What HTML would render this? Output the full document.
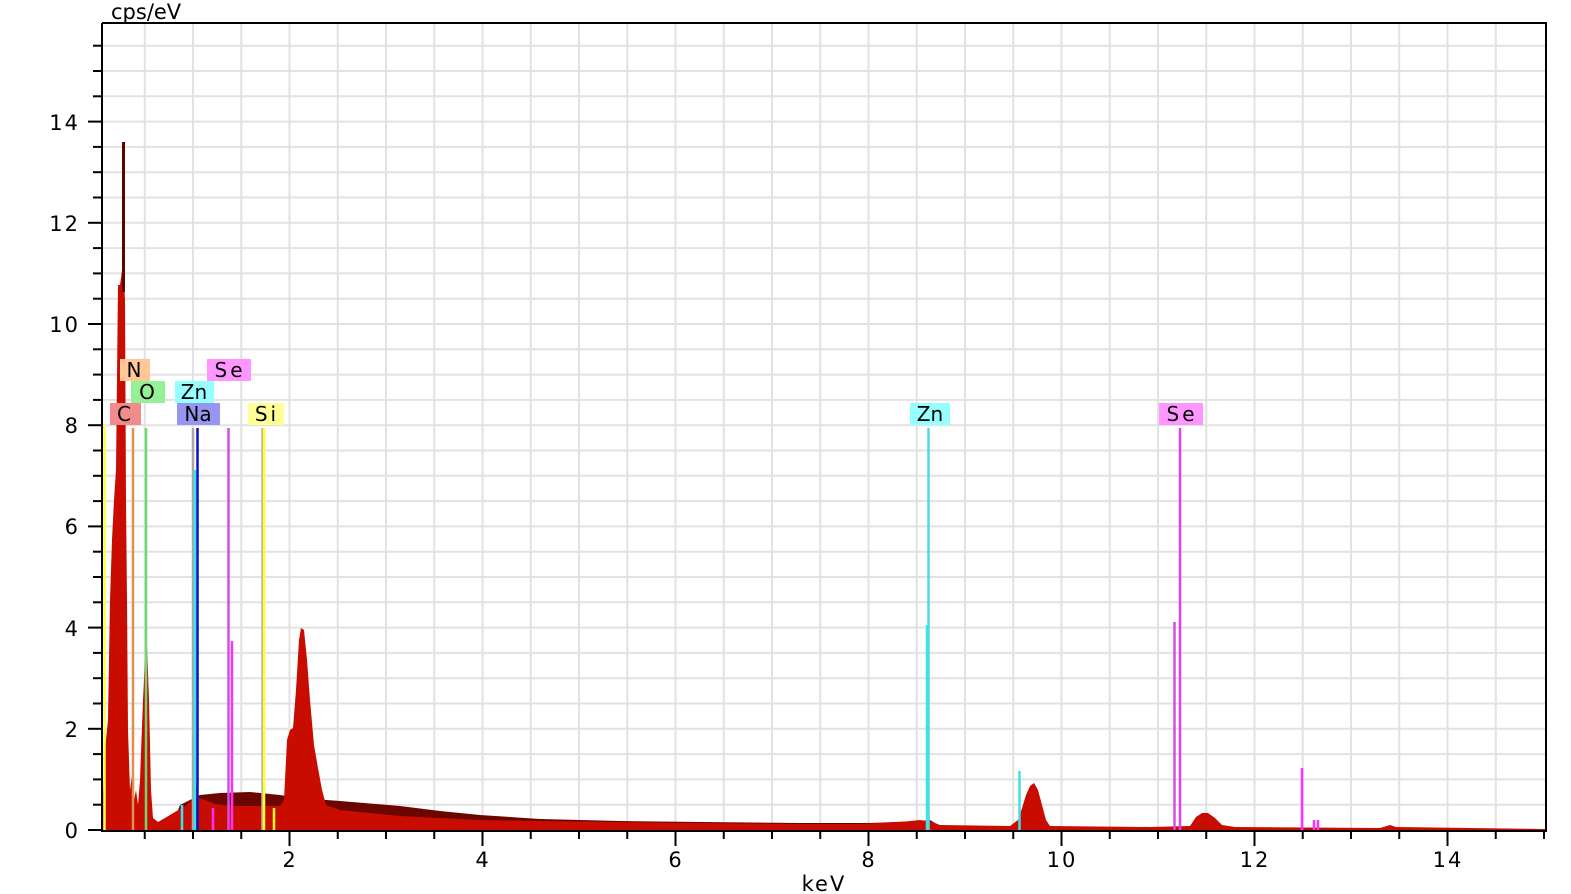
<!DOCTYPE html>
<html><head><meta charset="utf-8"><style>
html,body{margin:0;padding:0;background:#fff;}
svg{display:block;}
text{font-family:"DejaVu Sans","Liberation Sans",sans-serif;}
</style></head><body>
<svg width="1571" height="894" viewBox="0 0 1571 894" xmlns="http://www.w3.org/2000/svg">
<g stroke="#e2e2e2" stroke-width="2">
<line x1="144.75" y1="23" x2="144.75" y2="831"/><line x1="193" y1="23" x2="193" y2="831"/><line x1="241.25" y1="23" x2="241.25" y2="831"/><line x1="289.5" y1="23" x2="289.5" y2="831"/><line x1="337.75" y1="23" x2="337.75" y2="831"/><line x1="386" y1="23" x2="386" y2="831"/><line x1="434.25" y1="23" x2="434.25" y2="831"/><line x1="482.5" y1="23" x2="482.5" y2="831"/><line x1="530.75" y1="23" x2="530.75" y2="831"/><line x1="579" y1="23" x2="579" y2="831"/><line x1="627.25" y1="23" x2="627.25" y2="831"/><line x1="675.5" y1="23" x2="675.5" y2="831"/><line x1="723.75" y1="23" x2="723.75" y2="831"/><line x1="772" y1="23" x2="772" y2="831"/><line x1="820.25" y1="23" x2="820.25" y2="831"/><line x1="868.5" y1="23" x2="868.5" y2="831"/><line x1="916.75" y1="23" x2="916.75" y2="831"/><line x1="965" y1="23" x2="965" y2="831"/><line x1="1013.25" y1="23" x2="1013.25" y2="831"/><line x1="1061.5" y1="23" x2="1061.5" y2="831"/><line x1="1109.75" y1="23" x2="1109.75" y2="831"/><line x1="1158" y1="23" x2="1158" y2="831"/><line x1="1206.25" y1="23" x2="1206.25" y2="831"/><line x1="1254.5" y1="23" x2="1254.5" y2="831"/><line x1="1302.75" y1="23" x2="1302.75" y2="831"/><line x1="1351" y1="23" x2="1351" y2="831"/><line x1="1399.25" y1="23" x2="1399.25" y2="831"/><line x1="1447.5" y1="23" x2="1447.5" y2="831"/><line x1="1495.75" y1="23" x2="1495.75" y2="831"/>
</g>
<g id="hg" stroke="#e2e2e2" stroke-width="2"></g>
<polygon fill="#6a0500" points="170,831 180,805 200,795 220,793 250,792 280,795 300,798 340,801 400,806 440,811 480,815 540,819 620,821 700,822 800,823 870,823 920,821 930,820 940,826 1000,826 1000,831"/>
<polygon fill="#c80c00" points="102,831 104,760 106,740 108,720 110,600 112,540 114,500 116,470 118,285 120,285 122,270 124,280 125,300 126,500 127,600 128,730 130,790 132,775 134,800 136,790 138,805 140,780 143,700 145,660 147,645 149,700 151,790 153,818 158,822 165,818 175,812 185,806 192,800 196,785 199,798 205,800 215,804 230,806 260,806 280,806 284,800 287,740 290,730 293,728 296,690 299,640 301,628 304,630 307,660 310,700 314,745 318,768 322,790 326,805 340,810 360,812 400,816 440,818 480,820 540,821 620,822 700,823 800,824 860,824 900,822 920,820 932,822 940,825 1010,826 1018,820 1022,808 1026,795 1030,786 1034,783 1038,790 1042,805 1046,820 1050,826 1150,827 1190,826 1196,817 1202,813 1208,813 1215,818 1222,825 1235,827 1380,828 1390,825 1396,827 1545,829 1545,831"/>
<rect x="108" y="720" width="6" height="111" fill="#c80c00"/>
<rect x="122" y="142" width="3" height="150" fill="#5a0500"/>
<g stroke-width="2.5">
<line x1="104.5" y1="425" x2="104.5" y2="831" stroke="#ffff40"/>
<line x1="133" y1="428" x2="133" y2="831" stroke="#e0904a"/>
<line x1="146" y1="428" x2="146" y2="831" stroke="#70d870"/>
<line x1="193" y1="428" x2="193" y2="831" stroke="#a8a8a8"/>
<line x1="195" y1="470" x2="195" y2="831" stroke="#30e8f0"/>
<line x1="197.5" y1="428" x2="197.5" y2="831" stroke="#1010c0"/>
<line x1="228.5" y1="428" x2="228.5" y2="831" stroke="#d050e0"/>
<line x1="232" y1="641" x2="232" y2="831" stroke="#ff30ff"/>
<line x1="262.5" y1="428" x2="262.5" y2="831" stroke="#b0b0b0"/>
<line x1="264" y1="428" x2="264" y2="831" stroke="#ffff20"/>
<line x1="927" y1="625" x2="927" y2="831" stroke="#30e8f0"/>
<line x1="928.5" y1="428" x2="928.5" y2="831" stroke="#50d8e0"/>
<line x1="1019.5" y1="771" x2="1019.5" y2="831" stroke="#40e0e8"/>
<line x1="1174.5" y1="622" x2="1174.5" y2="831" stroke="#d050e0"/>
<line x1="1180" y1="428" x2="1180" y2="831" stroke="#e040f0"/>
<line x1="1302" y1="768" x2="1302" y2="831" stroke="#ff30ff"/>
<line x1="1314" y1="820" x2="1314" y2="831" stroke="#ff30ff"/>
<line x1="1318" y1="820" x2="1318" y2="831" stroke="#ff30ff"/>
<line x1="182" y1="805" x2="182" y2="831" stroke="#30e8f0"/>
<line x1="274" y1="808" x2="274" y2="831" stroke="#ffff20"/>
<line x1="213" y1="808" x2="213" y2="831" stroke="#ff30ff"/>
</g>
<g font-size="20" text-anchor="middle" fill="#000">
<rect x="110" y="403" width="31" height="22" fill="#f08c8c"/><text x="124" y="421">C</text>
<rect x="120" y="359" width="30" height="22" fill="#ffc896"/><text x="134" y="377">N</text>
<rect x="131" y="381" width="34" height="22" fill="#96f096"/><text x="147" y="399">O</text>
<rect x="175" y="381" width="39" height="22" fill="#96ffff"/><text x="194" y="399">Zn</text>
<rect x="177" y="403" width="43" height="22" fill="#9696f0"/><text x="198" y="421">Na</text>
<rect x="207" y="359" width="44" height="22" fill="#ff96ff"/><text x="230" y="377" letter-spacing="3">Se</text>
<rect x="248" y="403" width="36" height="22" fill="#ffff96"/><text x="267" y="421" letter-spacing="3">Si</text>
<rect x="910" y="403" width="40" height="22" fill="#96ffff"/><text x="930" y="421">Zn</text>
<rect x="1159" y="403" width="44" height="22" fill="#ff96ff"/><text x="1182" y="421" letter-spacing="3">Se</text>
</g>
<g stroke="#000" stroke-width="2" fill="none">
<polyline points="102,23 1546,23 1546,831 102,831 102,23"/>
</g>
<g id="ticks" stroke="#000" stroke-width="2"></g>
<g font-size="21" fill="#000" text-anchor="end" letter-spacing="2">
<text x="80" y="838">0</text><text x="80" y="737">2</text><text x="80" y="636">4</text><text x="80" y="534">6</text><text x="80" y="433">8</text><text x="80" y="332">10</text><text x="80" y="231">12</text><text x="80" y="130">14</text>
</g>
<g font-size="21" fill="#000" text-anchor="middle" letter-spacing="2">
<text x="290" y="867">2</text><text x="483" y="867">4</text><text x="676" y="867">6</text><text x="869" y="867">8</text><text x="1062" y="867">10</text><text x="1255" y="867">12</text><text x="1448" y="867">14</text>
<text x="824" y="891">keV</text>
</g>
<text x="111" y="19" font-size="21" fill="#000">cps/eV</text>
<script>
(function(){var ns='http://www.w3.org/2000/svg',g=document.getElementById('hg'),ax=document.getElementById('ticks');
function ln(p,a,b,c,d){var l=document.createElementNS(ns,'line');l.setAttribute('x1',a);l.setAttribute('y1',b);l.setAttribute('x2',c);l.setAttribute('y2',d);p.appendChild(l);}
for(var i=1;i<32;i++){var y=830-25.3*i;ln(g,102,y,1546,y);}
for(var i=0;i<32;i++){var y=830-25.3*i;var len=(i%4==0)?14:9;ln(ax,102-len,y,102,y);}
for(var k=1;k<=30;k++){var x=96.5+48.25*k;var len=(k%4==0)?15:8;ln(ax,x,831,x,831+len);}
})();
</script>
</svg>
</body></html>
